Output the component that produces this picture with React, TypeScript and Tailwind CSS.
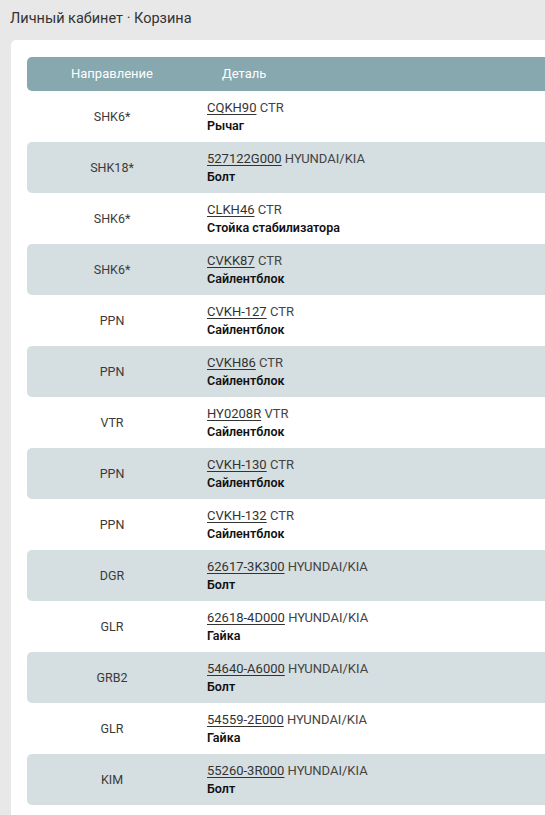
const rows: [string, string, string, string][] = [
  ['SHK6*', 'CQKH90', 'CTR', 'Рычаг'],
  ['SHK18*', '527122G000', 'HYUNDAI/KIA', 'Болт'],
  ['SHK6*', 'CLKH46', 'CTR', 'Стойка стабилизатора'],
  ['SHK6*', 'CVKK87', 'CTR', 'Сайлентблок'],
  ['PPN', 'CVKH-127', 'CTR', 'Сайлентблок'],
  ['PPN', 'CVKH86', 'CTR', 'Сайлентблок'],
  ['VTR', 'HY0208R', 'VTR', 'Сайлентблок'],
  ['PPN', 'CVKH-130', 'CTR', 'Сайлентблок'],
  ['PPN', 'CVKH-132', 'CTR', 'Сайлентблок'],
  ['DGR', '62617-3K300', 'HYUNDAI/KIA', 'Болт'],
  ['GLR', '62618-4D000', 'HYUNDAI/KIA', 'Гайка'],
  ['GRB2', '54640-A6000', 'HYUNDAI/KIA', 'Болт'],
  ['GLR', '54559-2E000', 'HYUNDAI/KIA', 'Гайка'],
  ['KIM', '55260-3R000', 'HYUNDAI/KIA', 'Болт'],
];

export default function App() {
  return (
    <div className="min-h-screen w-[545px] overflow-hidden bg-[#e8e8e8] font-['Roboto',sans-serif]">
      <div className="pl-[10px] pt-[10px] h-[40px] text-[14.5px] leading-[18px] text-[#333]">
        Личный кабинет · Корзина
      </div>
      <div className="ml-[11px] bg-white rounded-tl-[5px] pl-[16px] pt-[17px] pb-[11px]">
        <div className="flex h-[34px] items-center bg-[#86a8ae] rounded-l-[5px] text-white text-[13px]">
          <div className="w-[170px] text-center">Направление</div>
          <div className="pl-[25px]">Деталь</div>
        </div>
        {rows.map(([dir, code, brand, name], i) => (
          <div
            key={i}
            className={
              'flex h-[51px] items-center rounded-l-[5px] ' +
              (i % 2 === 1 ? 'bg-[#d5dee0]' : 'bg-white')
            }
          >
            <div className="w-[170px] pt-[1px] text-center text-[12.5px] text-[#3a3a3a]">{dir}</div>
            <div className="pl-[10px] pt-[1px] leading-[18px]">
              <div className="text-[13px] text-[#444]">
                <span className="underline underline-offset-2 text-[#333]">{code}</span> {brand}
              </div>
              <div className="text-[12.5px] font-semibold text-[#111]">{name}</div>
            </div>
          </div>
        ))}
      </div>
    </div>
  );
}
